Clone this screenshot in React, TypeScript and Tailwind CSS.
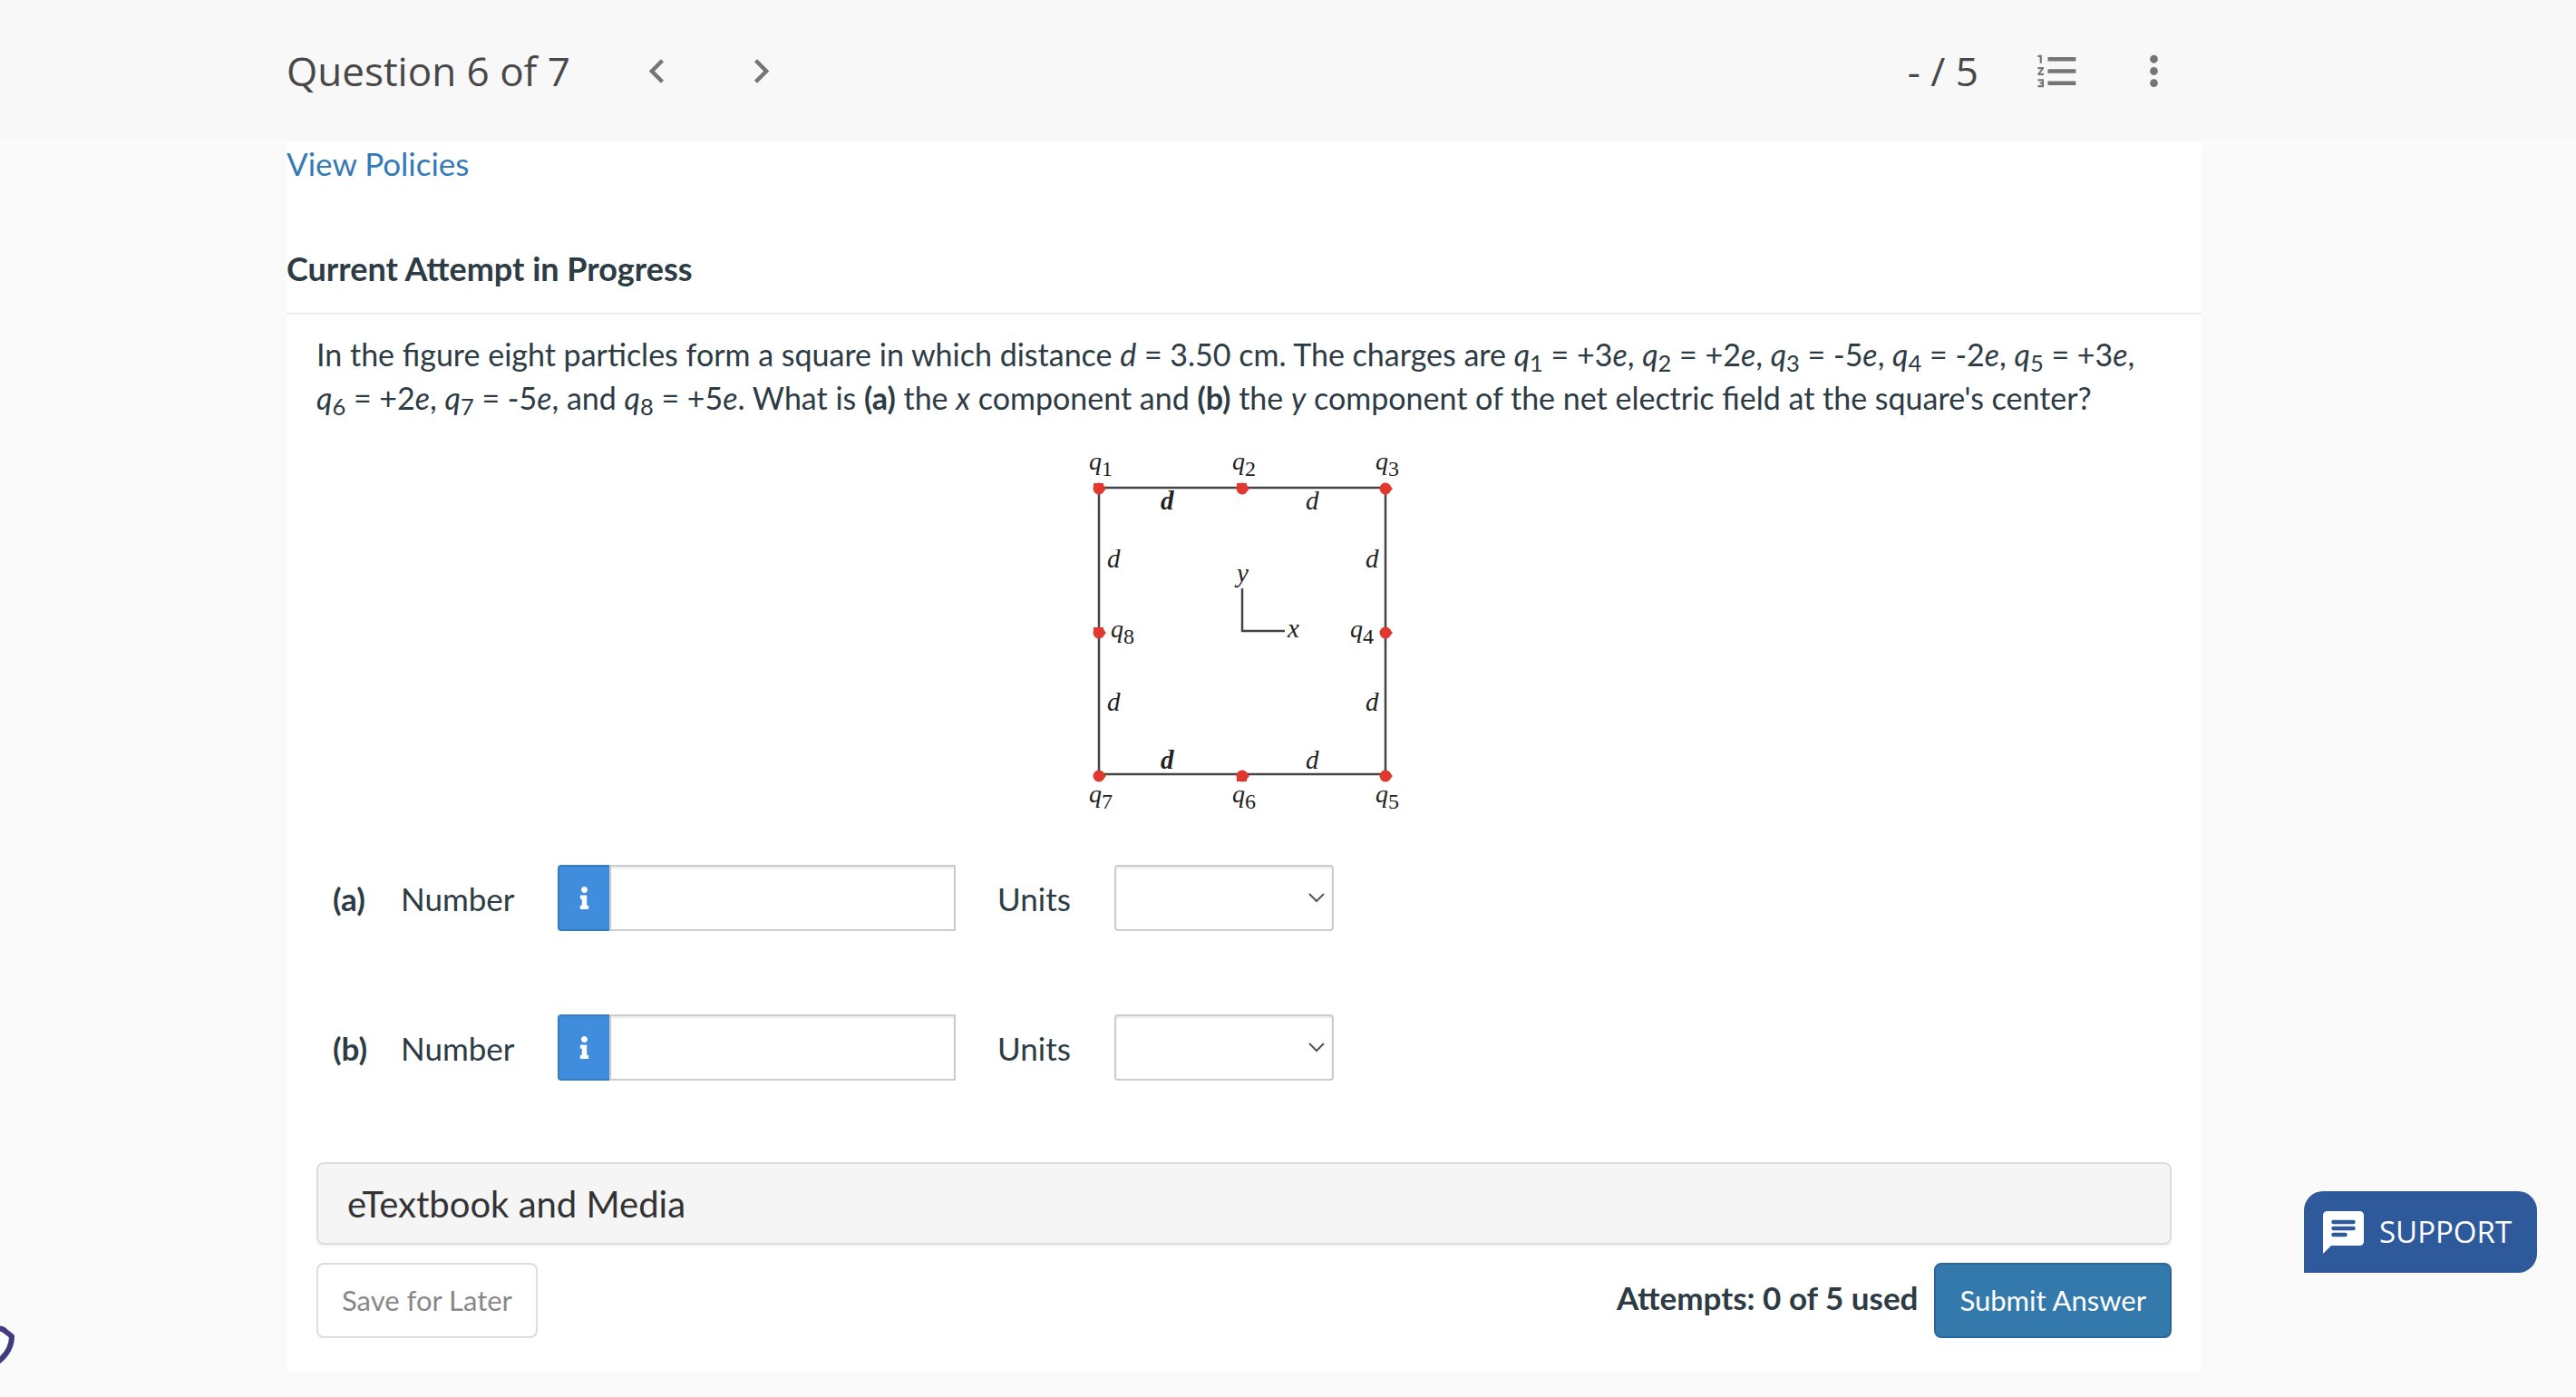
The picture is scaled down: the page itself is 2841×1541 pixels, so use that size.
import { useState } from "react";
import {
  MdChevronLeft,
  MdChevronRight,
  MdFormatListNumbered,
  MdMoreVert,
} from "react-icons/md";
import { FaInfo } from "react-icons/fa";

interface Charge {
  n: number;
  x: number;
  y: number;
  labelX: number;
  labelY: number;
  flat?: "top" | "bottom";
}

const charges: Charge[] = [
  { n: 1, x: 20, y: 48, labelX: 9, labelY: 28, flat: "top" },
  { n: 2, x: 178, y: 48, labelX: 167, labelY: 28, flat: "top" },
  { n: 3, x: 336, y: 48, labelX: 325, labelY: 28 },
  { n: 4, x: 336, y: 207, labelX: 297, labelY: 213 },
  { n: 5, x: 336, y: 365, labelX: 325, labelY: 395 },
  { n: 6, x: 178, y: 365, labelX: 167, labelY: 395, flat: "bottom" },
  { n: 7, x: 20, y: 365, labelX: 9, labelY: 395 },
  { n: 8, x: 20, y: 207, labelX: 33, labelY: 213, flat: "top" },
];

const distances = [
  { x: 88, y: 72, bold: true },
  { x: 248, y: 72, bold: false },
  { x: 29, y: 136, bold: false },
  { x: 314, y: 136, bold: false },
  { x: 29, y: 294, bold: false },
  { x: 314, y: 294, bold: false },
  { x: 88, y: 358, bold: true },
  { x: 248, y: 358, bold: false },
];

const SquareFigure = () => (
  <svg
    width="360"
    height="410"
    viewBox="0 0 360 410"
    role="img"
    aria-label="Eight charges on a square"
    className="font-['Liberation_Serif',serif]"
    fill="#222"
  >
    <rect x="20" y="48" width="316" height="316" fill="none" stroke="#444" strokeWidth="2.5" />
    <path d="M178 159v47h47" fill="none" stroke="#444" strokeWidth="2.5" />
    {charges.map((c) => (
      <g key={c.n}>
        <g fill="#df382f">
          <circle cx={c.x} cy={c.y + 1} r="6.5" />
          <path d={`M${c.x + 4} ${c.y - 3}l4 4-4 4z`} />
          {c.flat && (
            <rect
              x={c.x - 6}
              y={c.flat === "top" ? c.y - 5 : c.y + 1}
              width="11"
              height="6"
            />
          )}
        </g>
        <text x={c.labelX} y={c.labelY} fontSize="28" fontStyle="italic">
          q
          <tspan dy="7" fontSize="24" fontStyle="normal">
            {c.n}
          </tspan>
        </text>
      </g>
    ))}
    {distances.map((d) => (
      <text
        key={`${d.x}-${d.y}`}
        x={d.x}
        y={d.y}
        fontSize="29"
        fontStyle="italic"
        fontWeight={d.bold ? 700 : 400}
      >
        d
      </text>
    ))}
    <text x="172" y="152" fontSize="29" fontStyle="italic">
      y
    </text>
    <text x="228" y="213" fontSize="29" fontStyle="italic">
      x
    </text>
  </svg>
);

const Q = ({ n }: { n: number }) => (
  <>
    <i>q</i>
    <sub>{n}</sub>
  </>
);

const AnswerRow = ({ part }: { part: string }) => {
  const [value, setValue] = useState("");
  const [unit, setUnit] = useState("");

  return (
    <div className="flex items-center pl-[18px]">
      <b className="w-[75px]">({part})</b>
      <label htmlFor={`number-${part}`} className="w-[173px]">
        Number
      </label>
      <div className="flex h-[73px] w-[439px]">
        <button
          aria-label="Number format help"
          className="flex w-[57px] shrink-0 items-center justify-center rounded-l border-2 border-r-0 border-[#357ebd] bg-[#3f8ddc] text-white"
        >
          <FaInfo className="text-[25px]" />
        </button>
        <input
          id={`number-${part}`}
          value={value}
          onChange={(e) => setValue(e.target.value)}
          className="min-w-0 flex-1 border-2 border-[#ccc] bg-white px-6 shadow-[inset_0_2px_2px_rgba(0,0,0,0.075)]"
        />
      </div>
      <label htmlFor={`units-${part}`} className="ml-[46px] w-[129px]">
        Units
      </label>
      <div className="relative h-[73px] w-[242px]">
        <select
          id={`units-${part}`}
          value={unit}
          onChange={(e) => setUnit(e.target.value)}
          className="h-full w-full appearance-none rounded border-2 border-[#ccc] bg-white px-4 shadow-[inset_0_2px_2px_rgba(0,0,0,0.075)]"
        >
          <option value=""></option>
        </select>
        <svg
          className="pointer-events-none absolute top-[31px] right-[9px]"
          width="20"
          height="12"
          fill="none"
          stroke="#555"
          strokeWidth="2"
        >
          <path d="M2 1l8 8 8-8" />
        </svg>
      </div>
    </div>
  );
};

const iconButton = "flex size-[106px] items-center justify-center text-[53px] text-[#757575]";

const App = () => {
  return (
    <div className="min-h-screen bg-[#fafafa] font-[Lato,sans-serif] text-[35px] leading-[48px] text-[#2d3b45]">
      <header className="flex h-[156px] items-center bg-[#f8f8f8] px-6 font-['Open_Sans',sans-serif] text-[44px] text-[#484848] xl:pr-[413px] xl:pl-[316px]">
        <h1>Question 6 of 7</h1>
        <nav className="ml-[42px] flex gap-[9px]">
          <button aria-label="Previous question" className={iconButton}>
            <MdChevronLeft />
          </button>
          <button aria-label="Next question" className={iconButton}>
            <MdChevronRight />
          </button>
        </nav>
        <p className="mr-[34px] ml-auto">- / 5</p>
        <button aria-label="Question list" className={iconButton}>
          <MdFormatListNumbered />
        </button>
        <button aria-label="More options" className={iconButton}>
          <MdMoreVert />
        </button>
      </header>

      <div className="px-6 pb-7 xl:pr-[413px] xl:pl-[316px]">
        <main className="bg-white">
          <a href="#policies" className="text-[#337ab7]">
            View Policies
          </a>
          <h2 className="mt-[68px] border-b-2 border-[#eee] pb-[25px] text-4xl leading-[48px] font-bold">
            Current Attempt in Progress
          </h2>

          <div className="px-[33px] pt-5 pb-[37px]">
            <p className="text-[34px]">
              In the figure eight particles form a square in which distance <i>d</i> = 3.50 cm. The
              charges are <Q n={1} /> = +3<i>e</i>, <Q n={2} /> = +2<i>e</i>, <Q n={3} /> = -5
              <i>e</i>, <Q n={4} /> = -2<i>e</i>, <Q n={5} /> = +3<i>e</i>, <Q n={6} /> = +2
              <i>e</i>, <Q n={7} /> = -5<i>e</i>, and <Q n={8} /> = +5<i>e</i>. What is{" "}
              <b>(a)</b> the <i>x</i> component and <b>(b)</b> the <i>y</i> component of the net
              electric field at the square's center?
            </p>

            <div className="mt-[27px] flex justify-center">
              <SquareFigure />
            </div>

            <div className="mt-[54px] flex flex-col gap-[92px]">
              <AnswerRow part="a" />
              <AnswerRow part="b" />
            </div>

            <button className="mt-[90px] flex h-[91px] w-full items-center rounded-lg border-2 border-[#ddd] bg-[#f5f5f5] px-8 text-[40px] text-[#333] shadow-[0_2px_2px_rgba(0,0,0,0.05)]">
              eTextbook and Media
            </button>

            <div className="mt-5 flex items-center">
              <button className="h-[83px] rounded-lg border-2 border-[#ddd] bg-white px-[26px] pb-0.5 text-[31px] text-[#888]">
                Save for Later
              </button>
              <b className="mr-[18px] ml-auto pb-2">Attempts: 0 of 5 used</b>
              <button className="h-[83px] rounded-lg border-2 border-[#2b669a] bg-[#3479ac] px-[26px] pb-0.5 text-[31px] text-white">
                Submit Answer
              </button>
            </div>
          </div>
        </main>
      </div>

      <button className="fixed right-[43px] bottom-[137px] flex h-[90px] w-[257px] items-center gap-[17px] rounded-[21px] rounded-bl-none bg-[#2e5a9c] pl-[21px] font-['Open_Sans',sans-serif] text-[33px] font-medium text-white">
        <svg width="45" height="47" viewBox="0 0 45 47">
          <path d="M5 0h35q5 0 5 5v28q0 5-5 5H9L0 47V5q0-5 5-5z" fill="#fff" />
          <path
            d="M11.5 12h22M11.5 19h22M11.5 26h13"
            stroke="#2e5a9c"
            strokeWidth="4.5"
            strokeLinecap="round"
          />
        </svg>
        SUPPORT
      </button>

      <svg className="fixed bottom-[30px] left-0" width="18" height="50" viewBox="0 0 18 50">
        <path
          d="M-4 4.5Q3 4 6 7.5L13 13Q13 29-2 41"
          fill="#fff"
          stroke="#413c7f"
          strokeWidth="6"
          strokeLinejoin="round"
        />
      </svg>
    </div>
  );
};

export default App;
